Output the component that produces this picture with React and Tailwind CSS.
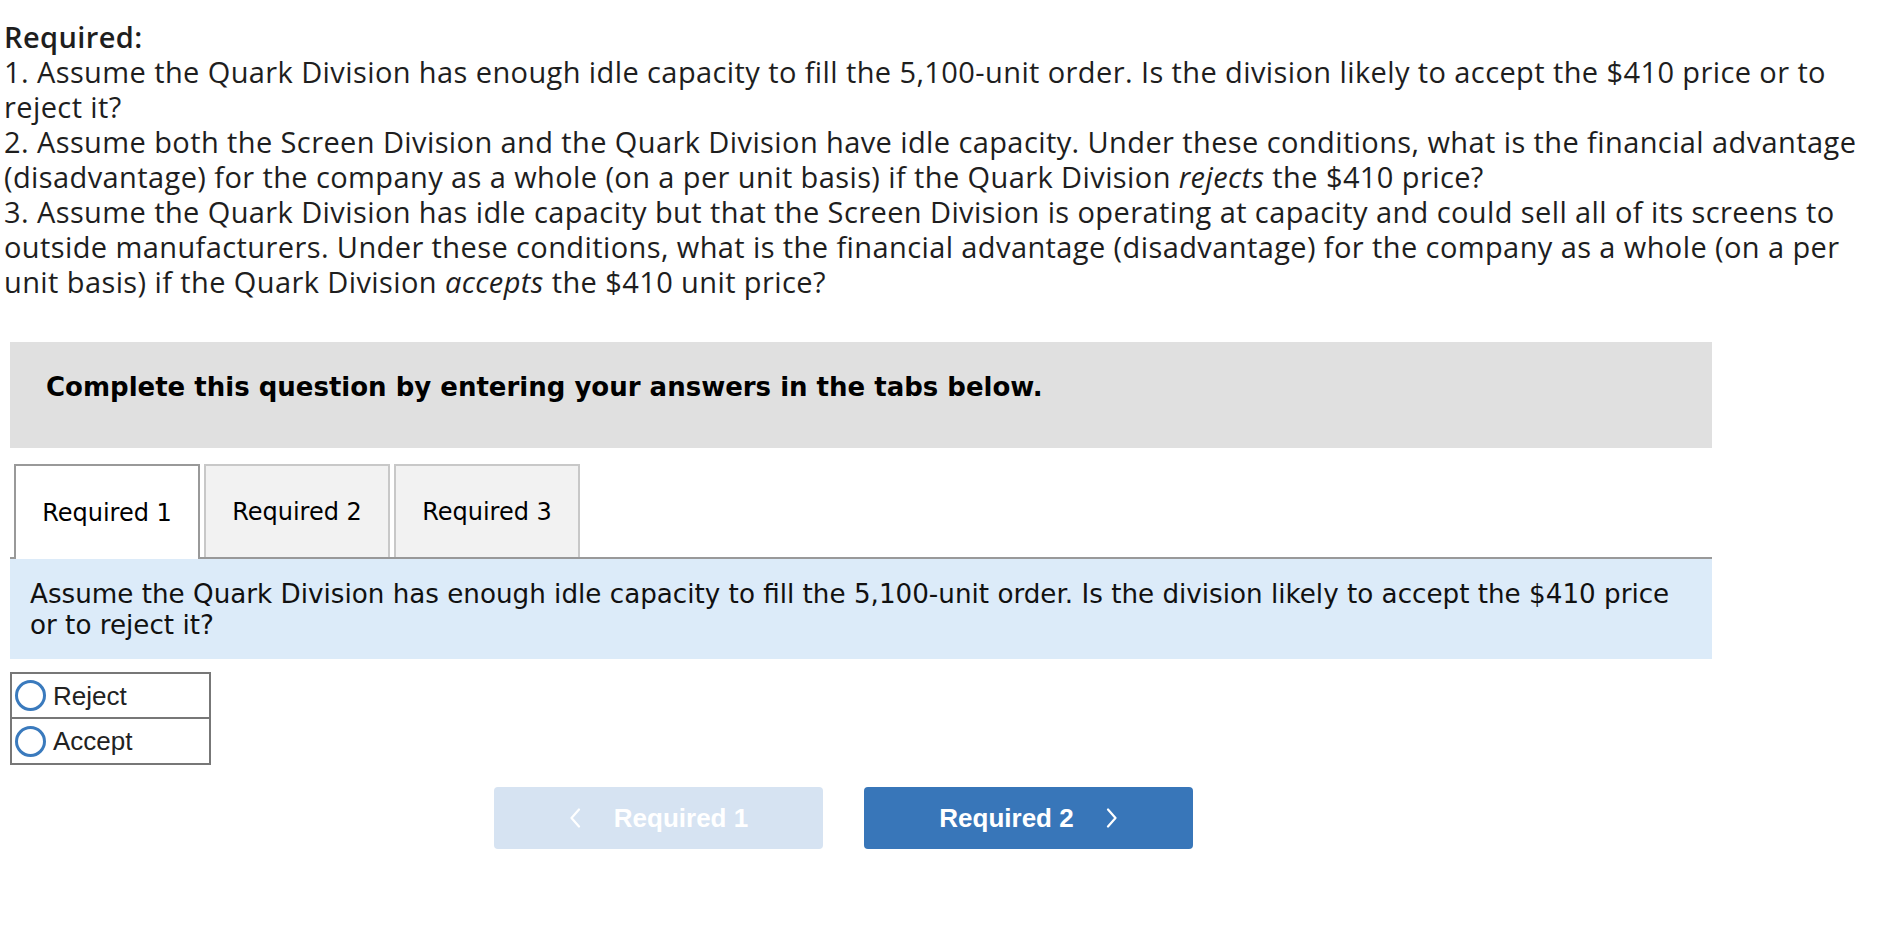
import React from "react";

const ChevronLeft = () => (
  <svg width="12" height="20" viewBox="0 0 12 20" fill="none">
    <path d="M10 1.5 L2.5 10 L10 18.5" stroke="white" strokeWidth="2.2" strokeLinecap="round" strokeLinejoin="round" />
  </svg>
);

const ChevronRight = () => (
  <svg width="12" height="20" viewBox="0 0 12 20" fill="none">
    <path d="M2 1.5 L9.5 10 L2 18.5" stroke="white" strokeWidth="2.2" strokeLinecap="round" strokeLinejoin="round" />
  </svg>
);

const Radio = ({ label, top }) => (
  <div className={`flex items-center ${top ? "h-[43px]" : "h-[46px] border-t-2 border-[#777]"}`}>
    <span className="ml-[3px] w-[31px] h-[31px] rounded-full border-[3.5px] border-[#3a7abd] bg-white shrink-0" />
    <span className="ml-[7px] font-['Liberation_Sans',Arial,sans-serif] text-[26px] text-[#222] leading-none">
      {label}
    </span>
  </div>
);

export default function App() {
  return (
    <div className="min-h-screen bg-white">
      <div className="pl-[4px] pr-[16px] pt-[19px] font-['Open_Sans',sans-serif] text-[29px] tracking-[0.4px] leading-[35px] text-[#1e1e1e]">
        <p className="font-semibold">Required:</p>
        <p>
          1. Assume the Quark Division has enough idle capacity to fill the 5,100-unit order. Is the division likely to accept the $410 price or to reject it?
        </p>
        <p>
          2. Assume both the Screen Division and the Quark Division have idle capacity. Under these conditions, what is the financial advantage (disadvantage) for the company as a whole (on a per unit basis) if the Quark Division <em>rejects</em> the $410 price?
        </p>
        <p>
          3. Assume the Quark Division has idle capacity but that the Screen Division is operating at capacity and could sell all of its screens to outside manufacturers. Under these conditions, what is the financial advantage (disadvantage) for the company as a whole (on a per unit basis) if the Quark Division <em>accepts</em> the $410 unit price?
        </p>
      </div>

      <div className="ml-[10px] w-[1702px] mt-[43px] font-['DejaVu_Sans',Verdana,sans-serif]">
        <div className="bg-[#e0e0e0] h-[106px] pl-[36px] pt-[30px]">
          <p className="font-bold text-[26px] leading-[30px] text-black">
            Complete this question by entering your answers in the tabs below.
          </p>
        </div>

        <div className="mt-[16px] flex items-end gap-[4px] pl-[4px] border-b-2 border-[#999]">
          <div className="relative -mb-[2px] w-[186px] h-[95px] bg-white border-2 border-b-0 border-[#999] flex items-center justify-center text-[24px] text-black">
            Required 1
          </div>
          <div className="w-[186px] h-[93px] bg-[#f2f2f2] border-2 border-b-0 border-[#c8c8c8] flex items-center justify-center text-[24px] text-black">
            Required 2
          </div>
          <div className="w-[186px] h-[93px] bg-[#f2f2f2] border-2 border-b-0 border-[#c8c8c8] flex items-center justify-center text-[24px] text-black">
            Required 3
          </div>
        </div>

        <div className="bg-[#dcebf9] pt-[20px] pb-[18px] px-[20px] text-[26.2px] leading-[31px] text-[#111]">
          Assume the Quark Division has enough idle capacity to fill the 5,100-unit order. Is the division likely to accept the $410 price or to reject it?
        </div>

        <div className="mt-[13px] w-[201px] border-2 border-[#777]">
          <Radio label="Reject" top />
          <Radio label="Accept" />
        </div>

        <div className="mt-[22px] flex gap-[41px] pl-[484px] font-['Liberation_Sans',Arial,sans-serif]">
          <button className="w-[329px] h-[62px] rounded-[4px] bg-[#d6e3f2] flex items-center justify-center gap-[33px] text-white font-bold text-[26px]">
            <ChevronLeft />
            <span>Required 1</span>
          </button>
          <button className="w-[329px] h-[62px] rounded-[4px] bg-[#3876b9] flex items-center justify-center gap-[32px] text-white font-bold text-[26px]">
            <span>Required 2</span>
            <ChevronRight />
          </button>
        </div>
      </div>
    </div>
  );
}
